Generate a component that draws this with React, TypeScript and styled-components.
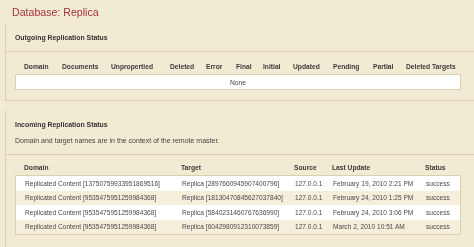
import React from 'react';
import styled, { createGlobalStyle } from 'styled-components';

const GlobalStyle = createGlobalStyle`
    html, body {
        margin:0;
        padding:0;
        background-color:#f2ebd3;
    }
    body {
        font-family:"Liberation Sans", Arial, sans-serif;
        color:#333333;
    }
`

const Page = styled.div`
    width:474px;
    height:247px;
    overflow:hidden;
    padding:0 0 0 5px;
    box-sizing:border-box;
    background-color:#f2ebd3;
    will-change:transform;
`
const Title = styled.h1`
    margin:0;
    padding:5px 0 0 7px;
    height:18px;
    box-sizing:border-box;
    font-size:10.6px;
    line-height:14px;
    font-weight:normal;
    color:#a2323e;
`
const Section = styled.section<{ gap: number }>`
    margin-top:${({ gap }) => gap}px;
    border-left:1px solid #ddd3b4;
    border-bottom:1px solid #d8cfae;
`
const SectionHead = styled.header`
    padding:10px 0 8px 9px;
    border-bottom:1px solid #d8cfae;
    display:flex;
    flex-direction:column;
    gap:6px;
`
const SectionTitle = styled.h2`
    margin:0;
    font-size:6.9px;
    line-height:10px;
    font-weight:bold;
    color:#333333;
`
const Note = styled.p`
    margin:0;
    font-size:7px;
    line-height:10px;
    color:#444444;
`
const SectionBody = styled.div<{ top: number; bottom: number }>`
    padding:${({ top }) => top}px 13px ${({ bottom }) => bottom}px 9px;
`
const Grid = styled.div<{ cols: string }>`
    display:grid;
    grid-template-columns:${({ cols }) => cols};
    align-items:center;
`
const HeadRow = styled(Grid)`
    height:16px;
`
const HeadCell = styled.span`
    padding-left:9px;
    font-size:6.7px;
    font-weight:bold;
    color:#3a3a3a;
    white-space:nowrap;
`
const Box = styled.div`
    border:1px solid #d9d0b2;
    background-color:#ffffff;
`
const Row = styled(Grid)<{ odd: boolean }>`
    height:14.5px;
    background-color:${({ odd }) => (odd ? '#f4eedb' : '#ffffff')};
`
const Cell = styled.span`
    padding-left:9px;
    font-size:6.6px;
    color:#4a4a4a;
    white-space:nowrap;
`
const Empty = styled.div`
    height:14px;
    display:flex;
    align-items:center;
    justify-content:center;
    font-size:6.7px;
    color:#444444;
`

const outCols = '38px 49px 59px 36px 30px 27px 30px 40px 40px 33px 1fr'
const outHeads = ['Domain', 'Documents', 'Unpropertied', 'Deleted', 'Error', 'Final', 'Initial', 'Updated', 'Pending', 'Partial', 'Deleted Targets']

const inCols = '157px 113px 38px 93px 1fr'
const inHeads = ['Domain', 'Target', 'Source', 'Last Update', 'Status']

const incoming = [
    ['Replicated Content [13750759933951869516]', 'Replica [2897660945907400796]', '127.0.0.1', 'February 19, 2010 2:21 PM', 'success'],
    ['Replicated Content [9535475951259984368]', 'Replica [18130470845627037840]', '127.0.0.1', 'February 24, 2010 1:25 PM', 'success'],
    ['Replicated Content [9535475951259984368]', 'Replica [5840231460767636990]', '127.0.0.1', 'February 24, 2010 3:06 PM', 'success'],
    ['Replicated Content [9535475951259984368]', 'Replica [6042980912310073859]', '127.0.0.1', 'March 2, 2010 10:51 AM', 'success'],
]

const App = () => {
    return (
        <Page>
            <GlobalStyle />
            <Title>Database: Replica</Title>
            <Section gap={5}>
                <SectionHead>
                    <SectionTitle>Outgoing Replication Status</SectionTitle>
                </SectionHead>
                <SectionBody top={6} bottom={10}>
                    <HeadRow cols={outCols}>
                        {outHeads.map((h) => <HeadCell key={h}>{h}</HeadCell>)}
                    </HeadRow>
                    <Box>
                        <Empty>None</Empty>
                    </Box>
                </SectionBody>
            </Section>
            <Section gap={9}>
                <SectionHead>
                    <SectionTitle>Incoming Replication Status</SectionTitle>
                    <Note>Domain and target names are in the context of the remote master.</Note>
                </SectionHead>
                <SectionBody top={4} bottom={12}>
                    <HeadRow cols={inCols}>
                        {inHeads.map((h) => <HeadCell key={h}>{h}</HeadCell>)}
                    </HeadRow>
                    <Box>
                        {incoming.map((r, i) => (
                            <Row key={i} cols={inCols} odd={i % 2 === 1}>
                                {r.map((c, j) => <Cell key={j}>{c}</Cell>)}
                            </Row>
                        ))}
                    </Box>
                </SectionBody>
            </Section>
        </Page>
    )
}

export default App
